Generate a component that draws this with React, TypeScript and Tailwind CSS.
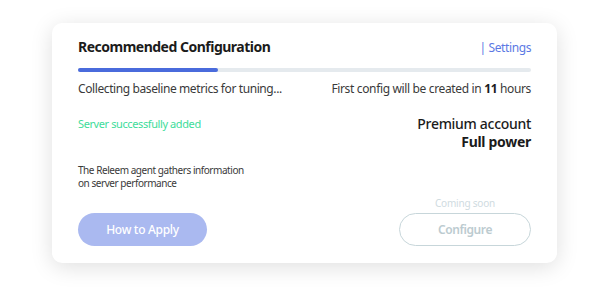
import React from "react";

const font = { fontFamily: '"Noto Sans", "Open Sans", sans-serif' };

export default function App() {
  return (
    <div className="min-h-[289px] w-[609px] bg-white pt-[23px]" style={font}>
      <div className="mx-auto w-[505px] rounded-[10px] bg-white px-[26px] pt-[15px] pb-[17px] shadow-[0_4px_22px_rgba(0,0,0,0.13)]">
        <div className="flex items-center justify-between">
          <h2 className="text-[14px] leading-[18px] font-bold tracking-[-0.5px] text-[#1b1b1b]">Recommended Configuration</h2>
          <a className="mt-[2px] text-[12px] leading-[16px] tracking-[-0.4px] text-[#5b79e4]">| Settings</a>
        </div>

        <div className="mt-[12px] h-[4px] w-full rounded-full bg-[#e5eaee]">
          <div className="h-[4px] w-[140px] rounded-full bg-[#4a6bdc]" />
        </div>

        <div className="mt-[9px] flex justify-between text-[12px] leading-[16px] text-[#3a3a3a]">
          <span className="tracking-[-0.4px]">Collecting baseline metrics for tuning...</span>
          <span className="tracking-[-0.35px]">
            First config will be created in <b className="text-[#1b1b1b]">11</b> hours
          </span>
        </div>

        <div className="mt-[18px] flex justify-between">
          <div className="flex flex-col">
            <span className="text-[11px] leading-[18px] tracking-[-0.4px] text-[#3ddc9a]">Server successfully added</span>
            <p className="mt-[30.5px] text-[10px] leading-[13px] tracking-[-0.45px] text-[#3a3a3a]">
              The Releem agent gathers information
              <br />
              on server performance
            </p>
          </div>
          <div className="flex flex-col items-end text-[14px] leading-[18px] tracking-[-0.3px] text-[#1b1b1b]">
            <span className="font-medium">Premium account</span>
            <span className="font-bold">Full power</span>
          </div>
        </div>

        <div className="mt-[7px] flex items-end justify-between">
          <button className="h-[33px] w-[129px] rounded-full bg-[#aab9f0] text-[12px] font-medium tracking-[-0.3px] text-white">How to Apply</button>
          <div className="flex flex-col items-center">
            <span className="text-[10px] leading-[13px] tracking-[-0.2px] text-[#cfdbdf]">Coming soon</span>
            <button className="mt-[3.5px] h-[33px] w-[132px] rounded-full border-[1.5px] border-[#c7d6da] text-[12px] font-semibold tracking-[-0.4px] text-[#bccbd0]">
              Configure
            </button>
          </div>
        </div>
      </div>
    </div>
  );
}
